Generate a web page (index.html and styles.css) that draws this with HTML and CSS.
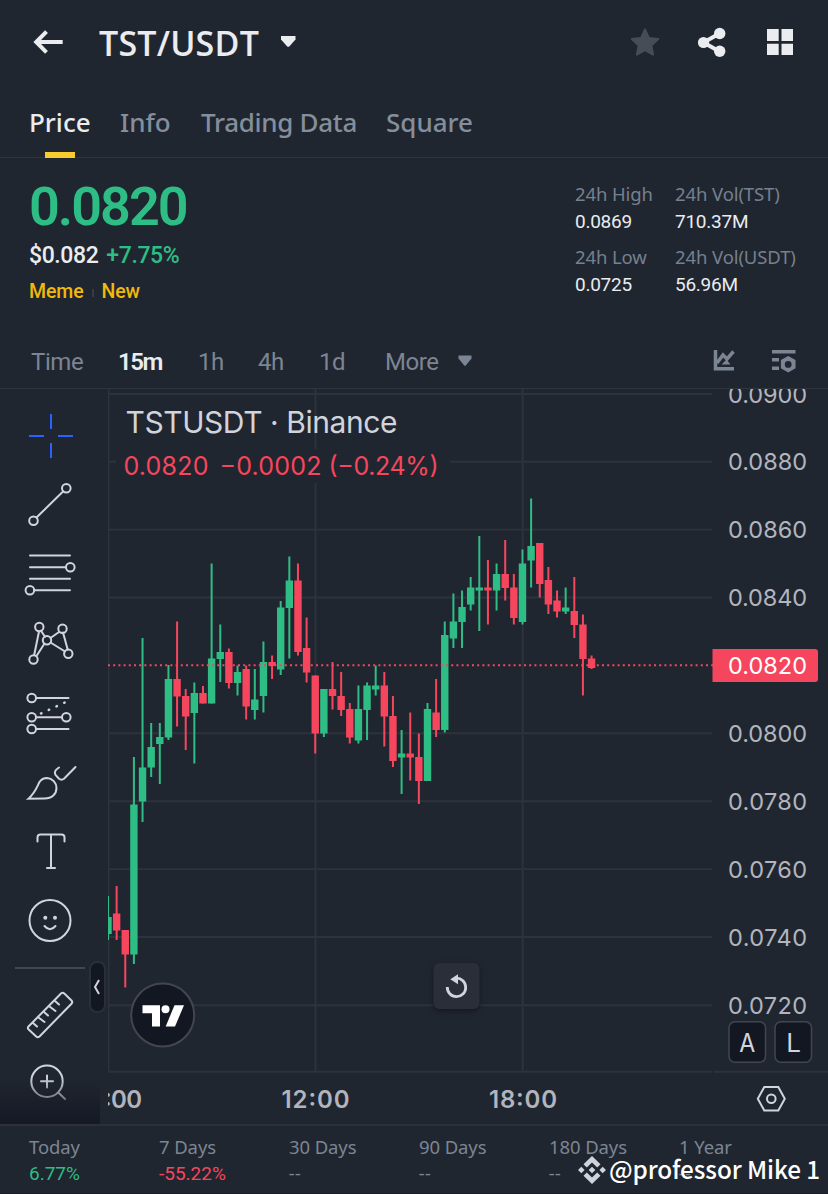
FILE: index.html
```html
<!DOCTYPE html>
<html lang="en">
<head>
<meta charset="UTF-8">
<meta name="viewport" content="width=device-width, initial-scale=1.0">
<title>TST/USDT</title>
<link rel="stylesheet" href="styles.css">
</head>
<body>
<header class="header">
    <svg class="back" width="32" height="26" viewBox="33 29 32 26"><path d="M62.7 42H37M46.5 31.7 36.2 42l10.3 10.3"/></svg>
    <h1>TST/USDT</h1>
    <svg class="caret" width="16" height="12" viewBox="280 36 16 12"><path d="M281 36h14.5v3.500L289.500 46.300q-1.200 1.100-2.500 0L281 39.500z"/></svg>
    <div class="actions">
        <svg width="30" height="30" viewBox="630 27 30 30"><path class="star" d="M645 29.500l3.900 8.400 9.300 1.200-6.900 6.300 1.800 9.200-8.100-4.500-8.100 4.500 1.800-9.200-6.900-6.300 9.300-1.200z"/></svg>
        <svg width="30" height="30" viewBox="697 27 30 30"><path class="share-line" d="M719.500 33.500l-16 9 16 9"/><circle cx="703.500" cy="42.500" r="5.600"/><circle cx="719.700" cy="33.500" r="5.700"/><circle cx="719.700" cy="51.300" r="5.700"/></svg>
        <svg width="28" height="30" viewBox="766 27 28 30"><path d="M767 29h11.700v12H767zM781.500 29H793v12h-11.500zM767 43.700h11.700V55H767zM781.500 43.700H793V55h-11.500z"/></svg>
    </div>
</header>

<nav class="tabs">
    <a class="tab tab-price active">Price</a>
    <a class="tab tab-info">Info</a>
    <a class="tab tab-data">Trading Data</a>
    <a class="tab tab-square">Square</a>
</nav>

<section class="summary">
    <div class="quote">
        <div class="last">0.0820</div>
        <div class="fiat"><span>$0.082</span><span class="up">+7.75%</span></div>
        <div class="tags"><span>Meme</span><i></i><span>New</span></div>
    </div>
    <div class="stats">
        <div class="stat"><label>24h High</label><b>0.0869</b></div>
        <div class="stat"><label>24h Vol(TST)</label><b>710.37M</b></div>
        <div class="stat"><label>24h Low</label><b>0.0725</b></div>
        <div class="stat"><label>24h Vol(USDT)</label><b>56.96M</b></div>
    </div>
</section>

<div class="intervals">
    <span class="i-time">Time</span>
    <span class="i-15m active">15m</span>
    <span class="i-1h">1h</span>
    <span class="i-4h">4h</span>
    <span class="i-1d">1d</span>
    <span class="i-more">More</span>
    <svg class="more-caret" width="14" height="12" viewBox="458 355 14 12"><path d="M458.500 355.500H471.500v3L466 365.300q-1 1-2 0L458.500 358.500z"/></svg>
    <svg class="type" width="24" height="24" viewBox="712 349 24 24"><path class="line" d="M715.500 350v18.700H734M717 363l6-8 4 4 6.500-7.500"/><path d="M721.500 364.500l5-5 4 5z"/></svg>
    <svg class="config" width="26" height="26" viewBox="771 348 26 26"><path d="M772 350h23.500v3.500H772zM772 358h7v3.500h-7zM772 366.500h7v3.500h-7z"/><path fill-rule="evenodd" d="M788.200 356l7.300 4v8.300l-7.300 4.200-7.300-4.200V360zM788.200 361a3.400 3.400 0 1 0 0 6.800 3.400 3.400 0 0 0 0-6.800z"/></svg>
</div>

<main class="chart">
    <aside class="tools">
        <!-- crosshair -->
        <svg class="cross" viewBox="0 401 108 69"><path d="M51 414v15M51 443v15M29 436h15M58 436h15"/></svg>
        <!-- trend line -->
        <svg viewBox="0 470 108 69"><path d="M36.500 517.500L63.300 491.300"/><circle cx="33.500" cy="520.700" r="4.300"/><circle cx="66.300" cy="488.200" r="4.300"/></svg>
        <!-- fib retracement -->
        <svg viewBox="0 539 108 69"><path d="M30 555.500h40M30 567.200h36M30 578.800h40M34 590.300h36"/><circle cx="70.300" cy="567.200" r="4.300"/><circle cx="29.900" cy="590.300" r="4.300"/></svg>
        <!-- pattern -->
        <svg viewBox="0 608 108 69"><path d="M39 631.500L34.200 655M41 630.700l4 6M44.500 643.500L36.500 656M50.500 638l8.500-6M50.500 642.500l14.500 9M63 632.500L67.700 649.500"/><circle cx="39.300" cy="627" r="4.200"/><circle cx="62.500" cy="628.700" r="4.200"/><circle cx="47" cy="640.200" r="4.200"/><circle cx="33.500" cy="659.500" r="4.200"/><circle cx="68.300" cy="653.700" r="4.200"/></svg>
        <!-- prediction -->
        <svg viewBox="0 677 108 69"><path d="M36 698h32.500M36 717.300h26M36 729h32.500"/><path class="dots" d="M41 713.500L67 701.500"/><circle cx="31.700" cy="698" r="4.300"/><circle cx="31.700" cy="717.300" r="4.300"/><circle cx="66.300" cy="717.300" r="4.300"/><circle cx="31.700" cy="729" r="4.300"/></svg>
        <!-- brush -->
        <svg viewBox="0 746 108 69"><path d="M28.500 798.700C35 793 36.500 788 39.500 782c2-3 4.500-4 7.500-4a10 10 0 0 1 9.500 10c0 6-4.500 10.500-12 10.500zM59 767.500c-4 2.500-5 5-3.500 7.500l3.500 3.800q2.500 1.800 5 0L75.500 767"/></svg>
        <!-- text -->
        <svg viewBox="0 815 108 69"><path d="M37.500 841.500v-4q0-3 3-3h21q3 0 3 3v4M51 834.500V868M47 868h8"/></svg>
        <!-- emoji -->
        <svg viewBox="0 884 108 69"><circle cx="50" cy="920.500" r="20.500"/><path d="M44.500 926q5.500 6.500 11 0"/><circle class="dot" cx="45.300" cy="917.800" r="2"/><circle class="dot" cx="55" cy="917.800" r="2"/></svg>
        <hr>
        <!-- ruler -->
        <svg viewBox="0 981 108 69"><path d="M28.500 1026.500L61 993.500q1.700-1.500 3.300 0l7.200 7q1.500 1.600 0 3.200L39.500 1036.500q-1.700 1.500-3.300 0l-7.500-7q-1.500-1.500-.2-3zM33 1023l4 3.500M38.500 1017.500l6 4.500M44 1012l4 3.500M49.500 1006.500l6 4.500M55 1001l4 3.500"/></svg>
        <!-- zoom in -->
        <svg viewBox="0 1050 108 69"><circle cx="47" cy="1081.300" r="15.700"/><path d="M41 1081.300h12M47 1075.500v12M58.500 1092.800l6.500 6.200"/></svg>
        <div class="fade"></div>
        <div class="handle"><svg viewBox="92 963 11 48"><path d="M99 980l-4 7 4 7"/></svg></div>
    </aside>

    <svg class="plot" width="720" height="735" viewBox="108 389 720 735">
        <g class="grid">
            <path d="M108 394H712M108 461.700H712M108 529.600H712M108 597.500H712M108 733.300H712M108 801.200H712M108 869.100H712M108 937H712M108 1005.200H712"/>
            <path d="M108.500 389V1071M315.500 389V1071M522.700 389V1071M108 1071.700H712M714 1071.700H828"/>
        </g>
        <rect class="mask" x="116" y="449" width="334" height="34"/>
        <g id="candles"></g>
        <path class="last-line" d="M108 665.300H713"/>
        <text class="symbol" x="125.500" y="433" textLength="272">TSTUSDT · Binance</text>
        <g class="change">
            <text x="123.500" y="474.500" textLength="85">0.0820</text>
            <text x="219.500" y="474.500" textLength="102">−0.0002</text>
            <text x="328.500" y="474.500" textLength="110">(−0.24%)</text>
        </g>
        <g class="axis">
            <text x="728" y="402.500" textLength="79">0.0900</text>
            <text x="728" y="470" textLength="79">0.0880</text>
            <text x="728" y="538" textLength="79">0.0860</text>
            <text x="728" y="606" textLength="79">0.0840</text>
            <text x="728" y="742" textLength="79">0.0800</text>
            <text x="728" y="810" textLength="79">0.0780</text>
            <text x="728" y="877.500" textLength="79">0.0760</text>
            <text x="728" y="945.500" textLength="79">0.0740</text>
            <text x="728" y="1013.500" textLength="79">0.0720</text>
        </g>
        <path class="badge" d="M712.500 649H815q3 0 3 3v27q0 3-3 3H712.500z"/>
        <text class="badge-text" x="728" y="674" textLength="79">0.0820</text>
        <g class="time">
            <text x="74" y="1107.500" textLength="68">06:00</text>
            <text x="281.500" y="1107.500" textLength="68">12:00</text>
            <text x="489" y="1107.500" textLength="68">18:00</text>
        </g>
        <g class="scale">
            <rect x="729" y="1021.700" width="36.500" height="40.500" rx="6"/>
            <rect x="775" y="1021.700" width="36.500" height="40.500" rx="6"/>
            <text x="747.200" y="1051.500" textLength="16" lengthAdjust="spacingAndGlyphs">A</text>
            <text x="793.500" y="1051.500">L</text>
        </g>
        <g class="settings"><path d="M764.300 1087h14l6.500 11.700-6.500 11.800h-14l-6.500-11.800z"/><circle cx="771.300" cy="1098.700" r="4.300"/></g>
        <g class="reset">
            <rect x="433.500" y="963" width="46" height="46" rx="6"/>
            <path class="arc" d="M447.300 987a9.200 9.200 0 1 0 9-8.800"/>
            <path class="tip" d="M458 974.300v10l-7.700-5z"/>
        </g>
        <g class="tv">
            <circle class="disc" cx="162.700" cy="1015" r="31.500"/>
            <path d="M142.500 1005.200H160v21.300h-8v-13.300h-9.500z"/><circle cx="165.500" cy="1009.200" r="4"/><path d="M174.500 1005.200h9.500l-9 21.300h-9.300z"/>
        </g>
    </svg>
</main>

<footer class="periods">
    <div><span>Today</span><b class="up">6.77%</b></div>
    <div><span>7 Days</span><b class="down">-55.22%</b></div>
    <div><span>30 Days</span><b>--</b></div>
    <div><span>90 Days</span><b>--</b></div>
    <div><span>180 Days</span><b>--</b></div>
    <div><span>1 Year</span><b>--</b></div>
    <div class="watermark">
        <svg width="28" height="28" viewBox="0 0 28 28"><path d="M14 0l8.500 8.300-3.300 3.200L14 6.400l-5.200 5.100-3.300-3.200zM14 28l8.500-8.300-3.300-3.200-5.200 5.100-5.200-5.100-3.300 3.200zM14 10.700l3.300 3.300-3.300 3.300-3.300-3.300zM3.300 10.700L6.600 14l-3.300 3.300L0 14zM24.700 10.700L28 14l-3.300 3.300-3.300-3.300z"/></svg>
        <span>@professor Mike 1</span>
    </div>
</footer>
<script src="chart.js"></script>
</body>
</html>
```
FILE: styles.css
```css
* {
    box-sizing: border-box;
}
body {
    margin: 0;
    width: 828px;
    height: 1194px;
    overflow: hidden;
    background: #202630;
    color: #eaecef;
    font-family: Roboto, "Noto Sans", sans-serif;
}
svg {
    display: block;
    flex: none;
}
.up { color: #2ebd85; }
.down { color: #f6465d; }

/* header */
.header {
    display: flex;
    align-items: center;
    height: 86px;
    padding: 0 34px 2px 33px;
}
.header svg { fill: #eaecef; }
.header .back {
    fill: none;
    stroke: #eaecef;
    stroke-width: 4;
}
.header h1 {
    width: 162px;
    margin: 1px 0 0 34px;
    font: 600 34px/40px "Open Sans", sans-serif;
    letter-spacing: 0.2px;
    white-space: nowrap;
}
.header .caret { margin-left: 19px; }
.actions {
    display: flex;
    margin-left: auto;
}
.actions svg + svg { margin-left: 37px; }
.actions svg:last-child { margin-left: 39px; }
.header .star {
    fill: #474d57;
    stroke: #474d57;
    stroke-width: 2;
    stroke-linejoin: round;
}
.share-line {
    fill: none;
    stroke: #eaecef;
    stroke-width: 4;
}

/* tabs */
.tabs {
    display: flex;
    height: 72px;
    padding-left: 29px;
    border-bottom: 1px solid #2e353f;
}
.tab {
    position: relative;
    height: 72px;
    color: #848e9c;
    font: 500 26px/73px "Noto Sans", sans-serif;
    white-space: nowrap;
}
.tab.active { color: #eaecef; }
.tab.active::after {
    content: "";
    position: absolute;
    left: 16px;
    bottom: 0;
    width: 30px;
    height: 6px;
    background: #f8cb2e;
}
.tab-price { width: 91px; }
.tab-info { width: 81px; }
.tab-data {
    width: 185px;
    letter-spacing: -0.3px;
}

/* summary */
.summary {
    display: flex;
    justify-content: space-between;
    height: 176px;
    padding: 0 23px 0 29px;
}
.last {
    height: 82px;
    color: #2ebd85;
    font-size: 54px;
    font-weight: 600;
    line-height: 97px;
    letter-spacing: -2px;
}
.fiat {
    display: flex;
    gap: 8px;
    height: 34px;
    font-size: 23px;
    font-weight: 500;
    line-height: 31px;
    letter-spacing: -0.4px;
}
.tags {
    display: flex;
    align-items: center;
    height: 34px;
    color: #f0b90b;
    font-size: 19.5px;
    font-weight: 500;
    letter-spacing: -0.1px;
}
.tags i {
    width: 2px;
    height: 8px;
    margin: 4px 8px 0;
    background: #353c47;
}
.stats {
    display: grid;
    grid-template-columns: 100px 130px;
    grid-auto-rows: 63px;
    padding-top: 23px;
}
.stat label, .stat b {
    display: block;
    font-size: 19px;
    font-weight: 400;
    line-height: 27px;
    white-space: nowrap;
}
.stat b { letter-spacing: -0.25px; }
.stat label {
    color: #76808e;
    font-family: "Noto Sans", sans-serif;
    font-size: 18.5px;
    line-height: 26px;
    padding-bottom: 1px;
    letter-spacing: -0.1px;
}

/* intervals */
.intervals {
    display: flex;
    align-items: center;
    height: 55px;
    padding-left: 31px;
    border-bottom: 1px solid #2e353f;
    color: #7c8593;
    font-size: 24px;
    line-height: 28px;
    letter-spacing: -0.4px;
}
.intervals span { padding-top: 1px; }
.intervals svg { fill: #7c8593; }
.intervals .active {
    color: #eaecef;
    font-weight: 600;
    letter-spacing: -1.5px;
}
.i-time { width: 87px; }
.i-15m { width: 80px; }
.i-1h { width: 60px; }
.i-4h { width: 61px; }
.i-1d { width: 66px; }
.i-more { width: 73px; }
.type { margin-left: 240px; }
.type .line {
    fill: none;
    stroke: #7c8593;
    stroke-width: 3.5;
}
.config { margin-left: 35px; }

/* chart */
.chart {
    display: flex;
    height: 735px;
}
.tools {
    position: relative;
    width: 108px;
    padding-top: 12px;
}
.tools > svg {
    width: 108px;
    height: 69px;
    fill: none;
    stroke: #d1d4dc;
    stroke-width: 2;
    stroke-linecap: round;
}
.tools .cross {
    stroke: #2962ff;
    stroke-linecap: butt;
}
.tools .dot {
    fill: #d1d4dc;
    stroke: none;
}
.tools .dots {
    stroke-dasharray: 0.5 8;
    stroke-width: 2.5;
}
.tools hr {
    height: 2px;
    margin: 14px 23px 12px 15px;
    border: 0;
    background: #434651;
}
.fade {
    position: absolute;
    left: 0;
    bottom: 0;
    width: 100px;
    height: 48px;
    background: linear-gradient(rgba(20, 22, 34, 0), #161925);
}
.handle {
    position: absolute;
    left: 89px;
    top: 572px;
    width: 17px;
    height: 52px;
    border: 2px solid #2a2e39;
    border-radius: 8px;
    background: #131722;
}
.handle svg {
    width: 11px;
    height: 48px;
    margin-left: 1px;
    fill: none;
    stroke: #d1d4dc;
    stroke-width: 2;
}
.plot { font-family: Inter, sans-serif; }
.grid {
    fill: none;
    stroke: #2c333d;
    stroke-width: 1.9;
}
.mask { fill: #202630; }
.green { fill: #2ebd85; }
.red { fill: #f6465d; }
.last-line {
    stroke: #f6465d;
    stroke-width: 2;
    stroke-dasharray: 2 3.2;
}
.symbol {
    fill: #d1d4dc;
    font-size: 30px;
}
.change {
    fill: #f6465d;
    font-size: 25px;
}
.axis {
    fill: #b2b5be;
    font-size: 23.5px;
}
.badge { fill: #f6465d; }
.badge-text {
    fill: #fff;
    font-size: 23.5px;
}
.time {
    fill: #b2b5be;
    font-size: 24px;
    font-weight: 600;
}
.scale rect {
    fill: #131722;
    stroke: #434651;
    stroke-width: 1.5;
}
.scale text {
    fill: #d1d4dc;
    font-size: 26px;
    text-anchor: middle;
}
.settings {
    fill: none;
    stroke: #d1d4dc;
    stroke-width: 2;
}
.reset rect {
    fill: #2a2e39;
    filter: drop-shadow(0 2px 3px #14161f);
}
.arc {
    fill: none;
    stroke: #d1d4dc;
    stroke-width: 2.8;
}
.tip { fill: #d1d4dc; }
.tv { fill: #fff; }
.disc {
    fill: #131722;
    stroke: #434651;
    stroke-width: 2;
}

/* periods */
.periods {
    position: relative;
    display: grid;
    grid-template-columns: repeat(6, 130px);
    height: 70px;
    padding: 8px 0 0 29px;
    border-top: 2px solid #2b313b;
    border-bottom: 1px solid #191a25;
}
.periods div > span {
    display: block;
    color: #7c8593;
    font: 18.5px/26px "Noto Sans", sans-serif;
    letter-spacing: -0.1px;
}
.periods b {
    display: block;
    font-size: 19px;
    font-weight: 400;
    line-height: 27px;
}
.periods b:not([class]) {
    color: #7c8593;
    letter-spacing: 1px;
}
.periods .watermark {
    position: absolute;
    left: 578px;
    top: 28px;
    display: flex;
    align-items: center;
    gap: 3px;
    height: 32px;
}
.watermark svg { fill: #cfd3dc; }
.periods .watermark span {
    color: #fff;
    font: 500 24.3px/32px "Noto Sans CJK SC", sans-serif;
    letter-spacing: -0.1px;
    margin-top: -3px;
    white-space: nowrap;
}
```
FILE: chart.js
```js
// 15m candles: direction, high, body top, body bottom, low
var candles = [
    ['g', 896, 917, 934, 940],
    ['r', 886, 913.5, 930.5, 940],
    ['r', 930, 930, 954.5, 987.5],
    ['g', 757, 804.5, 954.5, 964],
    ['g', 638, 767.5, 801.5, 822],
    ['g', 723, 747, 767.5, 777],
    ['g', 723, 737, 744, 784],
    ['g', 665, 679, 737.5, 740],
    ['r', 621.5, 679, 696.5, 726.5],
    ['r', 689, 696, 716.5, 750],
    ['g', 682.5, 693, 713, 763.5],
    ['r', 686, 693, 703.5, 703.5],
    ['g', 563.5, 658.5, 703.5, 703.5],
    ['g', 624.5, 652, 659, 682],
    ['r', 648.5, 652, 683, 688.5],
    ['g', 665.5, 672, 683, 695.5],
    ['r', 665.5, 669, 706.5, 719.5],
    ['g', 669, 699.5, 710, 719.5],
    ['g', 641.5, 662, 696, 712.5],
    ['r', 655.5, 662, 666, 679],
    ['g', 601, 607.5, 669.5, 675],
    ['g', 556.5, 580.5, 608, 658.5],
    ['r', 563.5, 580.5, 652, 655.5],
    ['r', 617.5, 648, 672.5, 682.5],
    ['r', 675.5, 675.5, 733.5, 753.5],
    ['g', 689, 689, 733.5, 737],
    ['r', 662, 689, 696, 709.5],
    ['r', 672, 696, 710, 716],
    ['r', 703, 709, 737.5, 743.5],
    ['g', 685.5, 709, 740.5, 743.5],
    ['g', 682.5, 685.5, 710, 740],
    ['g', 665.5, 685.5, 689.5, 695.5],
    ['r', 672, 685.5, 716.5, 746.5],
    ['r', 696, 716, 761, 767],
    ['g', 730, 753.5, 757.5, 794],
    ['r', 712.5, 753.5, 757.5, 780.5],
    ['r', 733.5, 757, 781, 804],
    ['g', 703, 709, 781, 781],
    ['r', 679, 712.5, 730, 737],
    ['g', 621.5, 635, 730, 732.5],
    ['g', 593.5, 621.5, 638.5, 648],
    ['g', 590.5, 607, 622, 648],
    ['g', 577, 587.5, 604.5, 610.5],
    ['g', 536, 587.5, 590.5, 631],
    ['r', 560, 587.5, 590.5, 624.5],
    ['g', 563.5, 574, 590.5, 610.5],
    ['r', 540, 574, 588, 600.5],
    ['r', 574, 587.5, 618, 624.5],
    ['g', 549.5, 563.5, 622, 624.5],
    ['g', 498.5, 546, 560.5, 587.5],
    ['r', 543, 543, 584, 597.5],
    ['r', 567, 580, 604.5, 614],
    ['r', 590.5, 600.5, 611.5, 617.5],
    ['g', 587.5, 607.5, 611.5, 614],
    ['r', 577, 611, 625, 638],
    ['r', 614.5, 624.5, 659, 695.5],
    ['r', 655.5, 658.5, 668, 669]
];

var group = document.getElementById('candles');

function addRect(cls, x, y, w, h) {
    var rect = document.createElementNS('http://www.w3.org/2000/svg', 'rect');
    rect.setAttribute('class', cls);
    rect.setAttribute('x', x);
    rect.setAttribute('y', y);
    rect.setAttribute('width', w);
    rect.setAttribute('height', h);
    group.appendChild(rect);
}

for (var i = 0; i < candles.length; i++) {
    var c = candles[i];
    var x = 108 + i * 8.635;
    var cls = c[0] == 'g' ? 'green' : 'red';
    addRect(cls, x - 1, c[1], 2, c[4] - c[1]);
    addRect(cls, x - 3.7, c[2], 7.4, c[3] - c[2]);
}
```
